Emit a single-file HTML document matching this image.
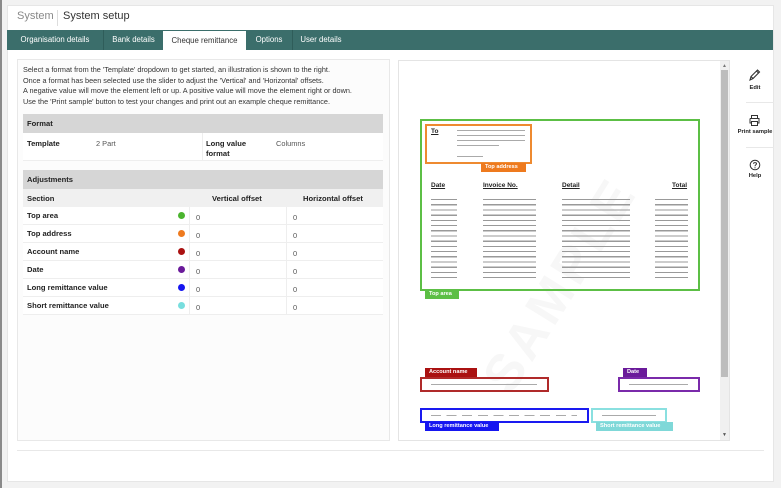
<!DOCTYPE html>
<html><head><meta charset="utf-8"><style>
*{margin:0;padding:0;box-sizing:border-box}
body{width:781px;height:488px;background:#f2f2f2;font-family:"Liberation Sans",sans-serif;position:relative;overflow:hidden;color:#222}
.a{position:absolute}
.card{left:7px;top:5px;width:767px;height:477px;background:#fff;border:1px solid #e6e6e6}
.tabs{left:7px;top:30px;width:766px;height:20px;background:#3b6e6b}
.tab{position:absolute;top:0;height:20px;line-height:20px;font-size:7.8px;color:#fff;text-align:center}
.tab.act{background:#fff;color:#333;top:1px;height:20px}
.sep{position:absolute;top:0;width:1px;height:20px;background:#2f5d5a}
.lp{left:17px;top:59px;width:373px;height:382px;background:#fcfcfc;border:1px solid #e8e8e8}
.intro{left:23px;top:65px;font-size:7.3px;line-height:10.6px;color:#333;white-space:nowrap}
.hd{background:#d6d6d6;font-weight:bold;font-size:7.6px;padding-left:4px;line-height:19px;height:19px}
.b{font-weight:bold;font-size:7.6px}
.s{font-size:7.4px;color:#555}
.row{position:absolute;left:23px;width:360px;height:18px;border-bottom:1px solid #eee;background:#fff}
.dot{position:absolute;left:155px;top:5px;width:7px;height:7px;border-radius:50%}
.rp{left:398px;top:60px;width:332px;height:381px;background:#fff;border:1px solid #e4e4e4}
.lines{position:absolute;background:repeating-linear-gradient(to bottom,#999 0,#999 1.2px,transparent 1.2px,transparent 5.2px)}
.lbl{position:absolute;height:9px;line-height:9px;font-size:5.6px;color:#fff;font-weight:bold;padding-left:4px;white-space:nowrap}
.bx{position:absolute;border:2px solid}
.hl{position:absolute;height:1px;background:#aaa}
.sb{font-size:5.8px;font-weight:bold;text-align:center;position:absolute;left:736px;width:38px}
</style></head><body>
<div class="a" style="left:0;top:0;width:2px;height:488px;background:#8a8a8a"></div>
<div class="a card"></div>
<div class="a" style="left:17px;top:10px;font-size:11px;color:#888">System</div>
<div class="a" style="left:57px;top:10px;width:1px;height:16px;background:#ddd"></div>
<div class="a" style="left:63px;top:10px;font-size:11px;color:#333">System setup</div>
<div class="a tabs">
<div class="tab" style="left:0;width:96px">Organisation details</div><div class="sep" style="left:96px"></div>
<div class="tab" style="left:97px;width:59px">Bank details</div>
<div class="tab act" style="left:156px;width:83px">Cheque remittance</div>
<div class="tab" style="left:239px;width:46px">Options</div><div class="sep" style="left:285px"></div>
<div class="tab" style="left:286px;width:56px">User details</div>
</div>
<div class="a lp"></div>
<div class="a intro">Select a format from the 'Template' dropdown to get started, an illustration is shown to the right.<br>Once a format has been selected use the slider to adjust the 'Vertical' and 'Horizontal' offsets.<br>A negative value will move the element left or up. A positive value will move the element right or down.<br>Use the 'Print sample' button to test your changes and print out an example cheque remittance.</div>
<div class="a hd" style="left:23px;top:114px;width:360px">Format</div>
<div class="a" style="left:23px;top:133px;width:360px;height:28px;background:#fff;border-bottom:1px solid #eee"></div>
<div class="a" style="left:202px;top:133px;width:1px;height:28px;background:#eee"></div>
<div class="a b" style="left:27px;top:139px">Template</div>
<div class="a s" style="left:96px;top:139px">2 Part</div>
<div class="a b" style="left:206px;top:139px;line-height:10px">Long value<br>format</div>
<div class="a s" style="left:276px;top:139px">Columns</div>
<div class="a hd" style="left:23px;top:170px;width:360px">Adjustments</div>
<div class="a" style="left:23px;top:189px;width:360px;height:18px;background:#f0f0f0"></div>
<div class="a b" style="left:27px;top:194px">Section</div>
<div class="a b" style="left:212px;top:194px">Vertical offset</div>
<div class="a b" style="left:303px;top:194px">Horizontal offset</div>
<div class="row" style="top:207px"><span class="a b" style="left:4px;top:4px">Top area</span><i class="dot" style="background:#4bb42f"></i><span class="a s" style="left:173px;top:6px">0</span><span class="a s" style="left:270px;top:6px">0</span></div>
<div class="row" style="top:225px"><span class="a b" style="left:4px;top:4px">Top address</span><i class="dot" style="background:#ee7a1e"></i><span class="a s" style="left:173px;top:6px">0</span><span class="a s" style="left:270px;top:6px">0</span></div>
<div class="row" style="top:243px"><span class="a b" style="left:4px;top:4px">Account name</span><i class="dot" style="background:#a11"></i><span class="a s" style="left:173px;top:6px">0</span><span class="a s" style="left:270px;top:6px">0</span></div>
<div class="row" style="top:261px"><span class="a b" style="left:4px;top:4px">Date</span><i class="dot" style="background:#6a1a9a"></i><span class="a s" style="left:173px;top:6px">0</span><span class="a s" style="left:270px;top:6px">0</span></div>
<div class="row" style="top:279px"><span class="a b" style="left:4px;top:4px">Long remittance value</span><i class="dot" style="background:#1616f0"></i><span class="a s" style="left:173px;top:6px">0</span><span class="a s" style="left:270px;top:6px">0</span></div>
<div class="row" style="top:297px"><span class="a b" style="left:4px;top:4px">Short remittance value</span><i class="dot" style="background:#78dede"></i><span class="a s" style="left:173px;top:6px">0</span><span class="a s" style="left:270px;top:6px">0</span></div>
<div class="a" style="left:189px;top:207px;width:1px;height:108px;background:#eee"></div>
<div class="a" style="left:286px;top:207px;width:1px;height:108px;background:#eee"></div>

<div class="a rp"></div>
<div class="a" style="left:720px;top:61px;width:9px;height:379px;background:#f0f0f0"></div>
<div class="a" style="left:721px;top:70px;width:7px;height:307px;background:#bdbdbd"></div>
<div class="a" style="left:722px;top:63px;font-size:5px;color:#777">▲</div>
<div class="a" style="left:722px;top:432px;font-size:5px;color:#555">▼</div>
<div class="a" style="left:440px;top:255px;font-size:52px;font-weight:bold;color:#f7f7f7;transform:rotate(-58deg);letter-spacing:4px">SAMPLE</div>

<div class="bx" style="left:420px;top:119px;width:280px;height:172px;border-color:#5cbf45"></div>
<div class="lbl" style="left:425px;top:290px;width:34px;background:#5cbf45">Top area</div>
<div class="bx" style="left:425px;top:124px;width:107px;height:40px;border-color:#ee8a30"></div>
<div class="lbl" style="left:481px;top:163px;width:45px;background:#ee7a1e">Top address</div>
<div class="a" style="left:431px;top:128px;font-size:6.5px;font-weight:bold;text-decoration:underline">To</div>
<div class="hl" style="left:457px;top:130px;width:68px"></div>
<div class="hl" style="left:457px;top:135px;width:68px"></div>
<div class="hl" style="left:457px;top:140px;width:68px"></div>
<div class="hl" style="left:457px;top:145px;width:42px"></div>
<div class="hl" style="left:457px;top:156px;width:26px"></div>
<div class="a" style="left:431px;top:182px;font-size:6.5px;font-weight:bold;text-decoration:underline">Date</div>
<div class="a" style="left:483px;top:182px;font-size:6.5px;font-weight:bold;text-decoration:underline">Invoice No.</div>
<div class="a" style="left:562px;top:182px;font-size:6.5px;font-weight:bold;text-decoration:underline">Detail</div>
<div class="a" style="left:672px;top:182px;font-size:6.5px;font-weight:bold;text-decoration:underline">Total</div>
<div class="lines" style="left:431px;top:199px;width:26px;height:79px"></div>
<div class="lines" style="left:483px;top:199px;width:53px;height:79px"></div>
<div class="lines" style="left:562px;top:199px;width:68px;height:79px"></div>
<div class="lines" style="left:655px;top:199px;width:33px;height:79px"></div>

<div class="lbl" style="left:425px;top:368px;width:52px;background:#a11">Account name</div>
<div class="bx" style="left:420px;top:377px;width:129px;height:15px;border-color:#b02a2a"></div>
<div class="hl" style="left:431px;top:384px;width:106px"></div>
<div class="lbl" style="left:623px;top:368px;width:24px;background:#6a1a9a">Date</div>
<div class="bx" style="left:618px;top:377px;width:82px;height:15px;border-color:#7a2aaa"></div>
<div class="hl" style="left:629px;top:384px;width:59px"></div>
<div class="bx" style="left:420px;top:408px;width:169px;height:15px;border-color:#1a1af0"></div>
<div class="a" style="left:431px;top:415px;width:146px;height:1px;background:repeating-linear-gradient(to right,#aaa 0,#aaa 10px,transparent 10px,transparent 15.6px)"></div>
<div class="lbl" style="left:425px;top:422px;width:74px;background:#1616f0">Long remittance value</div>
<div class="bx" style="left:591px;top:408px;width:76px;height:15px;border-color:#8ae0e0"></div>
<div class="hl" style="left:602px;top:415px;width:54px"></div>
<div class="lbl" style="left:596px;top:422px;width:77px;background:#7fd8d8">Short remittance value</div>

<div class="a" style="left:17px;top:450px;width:747px;height:1px;background:#e8e8e8"></div>
<svg class="a" style="left:748px;top:68px" width="13" height="14" viewBox="0 0 13 14"><path d="M2 12 L3 8.5 L9.5 2 L11.5 4 L5 10.5 Z M3 8.5 L5 10.5 M8.5 3 L10.5 5" fill="none" stroke="#333" stroke-width="1.1"/></svg>
<div class="sb" style="top:85px">Edit</div>
<div class="a" style="left:746px;top:102px;width:28px;height:1px;background:#e8e8e8"></div>
<svg class="a" style="left:748px;top:114px" width="13" height="13" viewBox="0 0 13 13"><path d="M3.5 4.5V1.5H9.5V4.5 M2 4.5H11V9H9.5 M3.5 9H2V4.5 M3.5 7.5H9.5V11.5H3.5Z" fill="none" stroke="#333" stroke-width="1"/></svg>
<div class="sb" style="top:129px;left:734px;width:42px">Print sample</div>
<div class="a" style="left:746px;top:147px;width:28px;height:1px;background:#e8e8e8"></div>
<svg class="a" style="left:749px;top:159px" width="12" height="12" viewBox="0 0 12 12"><circle cx="6" cy="6" r="4.8" fill="none" stroke="#333" stroke-width="1"/><path d="M4.5 4.7C4.5 3.2 7.5 3.2 7.5 4.7C7.5 5.8 6 5.8 6 7.2" fill="none" stroke="#333" stroke-width="1"/><circle cx="6" cy="8.8" r=".6" fill="#333"/></svg>
<div class="sb" style="top:173px">Help</div>
</body></html>
